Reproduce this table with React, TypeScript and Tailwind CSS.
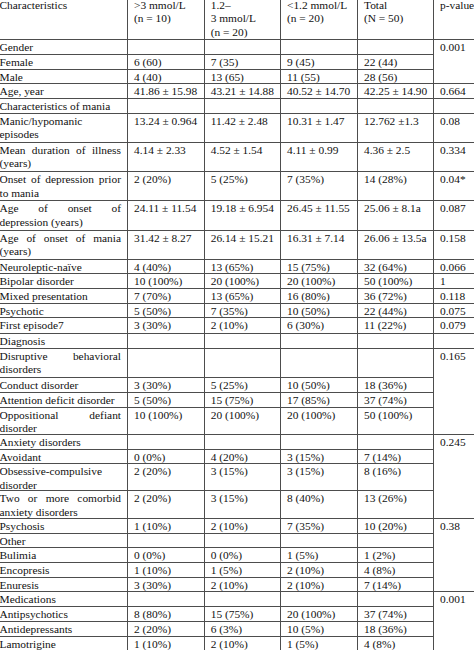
type Row = {
  label: string;
  cells: string[];
  p?: string;
  span?: string;
  h: string;
};

const blank = ["", "", "", ""];

// p === undefined means the p-value cell is covered by a row-span above
const rows: Row[] = [
  { label: "Gender", cells: blank, p: "0.001", span: "row-span-3", h: "h-[15px]" },
  { label: "Female", cells: ["6 (60)", "7 (35)", "9 (45)", "22 (44)"], h: "h-[14.7px]" },
  { label: "Male", cells: ["4 (40)", "13 (65)", "11 (55)", "28 (56)"], h: "h-[14.7px]" },
  { label: "Age, year", cells: ["41.86 ± 15.98", "43.21 ± 14.88", "40.52 ± 14.70", "42.25 ± 14.90"], p: "0.664", h: "h-[14.6px]" },
  { label: "Characteristics of mania", cells: blank, p: "", h: "h-[14.7px]" },
  { label: "Manic/hypomanic episodes", cells: ["13.24 ± 0.964", "11.42 ± 2.48", "10.31 ± 1.47", "12.762 ±1.3"], p: "0.08", h: "h-[29.3px]" },
  { label: "Mean duration of illness (years)", cells: ["4.14 ± 2.33", "4.52 ± 1.54", "4.11 ± 0.99", "4.36 ± 2.5"], p: "0.334", h: "h-[29.4px]" },
  { label: "Onset of depression prior to mania", cells: ["2 (20%)", "5 (25%)", "7 (35%)", "14 (28%)"], p: "0.04*", h: "h-[29px]" },
  { label: "Age of onset of depression (years)", cells: ["24.11 ± 11.54", "19.18 ± 6.954", "26.45 ± 11.55", "25.06 ± 8.1a"], p: "0.087", h: "h-[29.3px]" },
  { label: "Age of onset of mania (years)", cells: ["31.42 ± 8.27", "26.14 ± 15.21", "16.31 ± 7.14", "26.06 ± 13.5a"], p: "0.158", h: "h-[29px]" },
  { label: "Neuroleptic-naïve", cells: ["4 (40%)", "13 (65%)", "15 (75%)", "32 (64%)"], p: "0.066", h: "h-[14.7px]" },
  { label: "Bipolar disorder", cells: ["10 (100%)", "20 (100%)", "20 (100%)", "50 (100%)"], p: "1", h: "h-[14.6px]" },
  { label: "Mixed presentation", cells: ["7 (70%)", "13 (65%)", "16 (80%)", "36 (72%)"], p: "0.118", h: "h-[14.7px]" },
  { label: "Psychotic", cells: ["5 (50%)", "7 (35%)", "10 (50%)", "22 (44%)"], p: "0.075", h: "h-[14.7px]" },
  { label: "First episode7", cells: ["3 (30%)", "2 (10%)", "6 (30%)", "11 (22%)"], p: "0.079", h: "h-[15.5px]" },
  { label: "Diagnosis", cells: blank, p: "", h: "h-[15px]" },
  { label: "Disruptive behavioral disorders", cells: blank, p: "0.165", span: "row-span-4", h: "h-[29.3px]" },
  { label: "Conduct disorder", cells: ["3 (30%)", "5 (25%)", "10 (50%)", "18 (36%)"], h: "h-[15px]" },
  { label: "Attention deficit disorder", cells: ["5 (50%)", "15 (75%)", "17 (85%)", "37 (74%)"], h: "h-[14.5px]" },
  { label: "Oppositional defiant disorder", cells: ["10 (100%)", "20 (100%)", "20 (100%)", "50 (100%)"], h: "h-[27.3px]" },
  { label: "Anxiety disorders", cells: blank, p: "0.245", span: "row-span-4", h: "h-[14.7px]" },
  { label: "Avoidant", cells: ["0 (0%)", "4 (20%)", "3 (15%)", "7 (14%)"], h: "h-[14.6px]" },
  { label: "Obsessive-compulsive disorder", cells: ["2 (20%)", "3 (15%)", "3 (15%)", "8 (16%)"], h: "h-[27px]" },
  { label: "Two or more comorbid anxiety disorders", cells: ["2 (20%)", "3 (15%)", "8 (40%)", "13 (26%)"], h: "h-[28px]" },
  { label: "Psychosis", cells: ["1 (10%)", "2 (10%)", "7 (35%)", "10 (20%)"], p: "0.38", span: "row-span-5", h: "h-[14.7px]" },
  { label: "Other", cells: blank, h: "h-[14.3px]" },
  { label: "Bulimia", cells: ["0 (0%)", "0 (0%)", "1 (5%)", "1 (2%)"], h: "h-[14.7px]" },
  { label: "Encopresis", cells: ["1 (10%)", "1 (5%)", "2 (10%)", "4 (8%)"], h: "h-[14.7px]" },
  { label: "Enuresis", cells: ["3 (30%)", "2 (10%)", "2 (10%)", "7 (14%)"], h: "h-[14.6px]" },
  { label: "Medications", cells: blank, p: "0.001", span: "row-span-4", h: "h-[15px]" },
  { label: "Antipsychotics", cells: ["8 (80%)", "15 (75%)", "20 (100%)", "37 (74%)"], h: "h-[15px]" },
  { label: "Antidepressants", cells: ["2 (20%)", "6 (3%)", "10 (5%)", "18 (36%)"], h: "h-[15px]" },
  { label: "Lamotrigine", cells: ["1 (10%)", "2 (10%)", "1 (5%)", "4 (8%)"], h: "h-[15px]" },
];

const line = "border-r border-b border-[#4d4d4d] pt-[1px]";
const first = `col-start-1 ${line} pl-[7.5px] pr-[6px] text-justify`;
const cell = `${line} pl-[6px] pr-[3px] whitespace-nowrap`;

export default function App() {
  return (
    <div className="w-[474px] h-[650px] overflow-hidden bg-white text-[#111] font-['Liberation_Serif','Times_New_Roman',serif] text-[11.4px] leading-[13.5px]">
      <div className="grid grid-cols-[136px_76.7px_76.3px_77px_76px_90px] ml-[-8px] mt-[-2.4px]">
        {/* Header */}
        <div className={`${first} h-[42.4px]`}>Characteristics</div>
        <div className={`${cell} h-[42.4px]`}>
          &gt;3 mmol/L
          <br />
          (n = 10)
        </div>
        <div className={`${cell} h-[42.4px]`}>
          1.2–
          <br />3 mmol/L
          <br />
          (n = 20)
        </div>
        <div className={`${cell} h-[42.4px]`}>
          &lt;1.2 mmol/L
          <br />
          (n = 20)
        </div>
        <div className={`${cell} h-[42.4px]`}>
          Total
          <br />
          (N = 50)
        </div>
        <div className={`${cell} h-[42.4px]`}>p-value</div>

        {rows.map((r, i) => (
          <div key={i} className="contents">
            <div className={`${first} ${r.h}`}>{r.label}</div>
            {r.cells.map((c, j) => (
              <div key={j} className={`${cell} ${r.h}`}>
                {c}
              </div>
            ))}
            {r.p !== undefined && (
              <div className={`${cell} ${r.span ? r.span : r.h}`}>{r.p}</div>
            )}
          </div>
        ))}
      </div>
    </div>
  );
}
